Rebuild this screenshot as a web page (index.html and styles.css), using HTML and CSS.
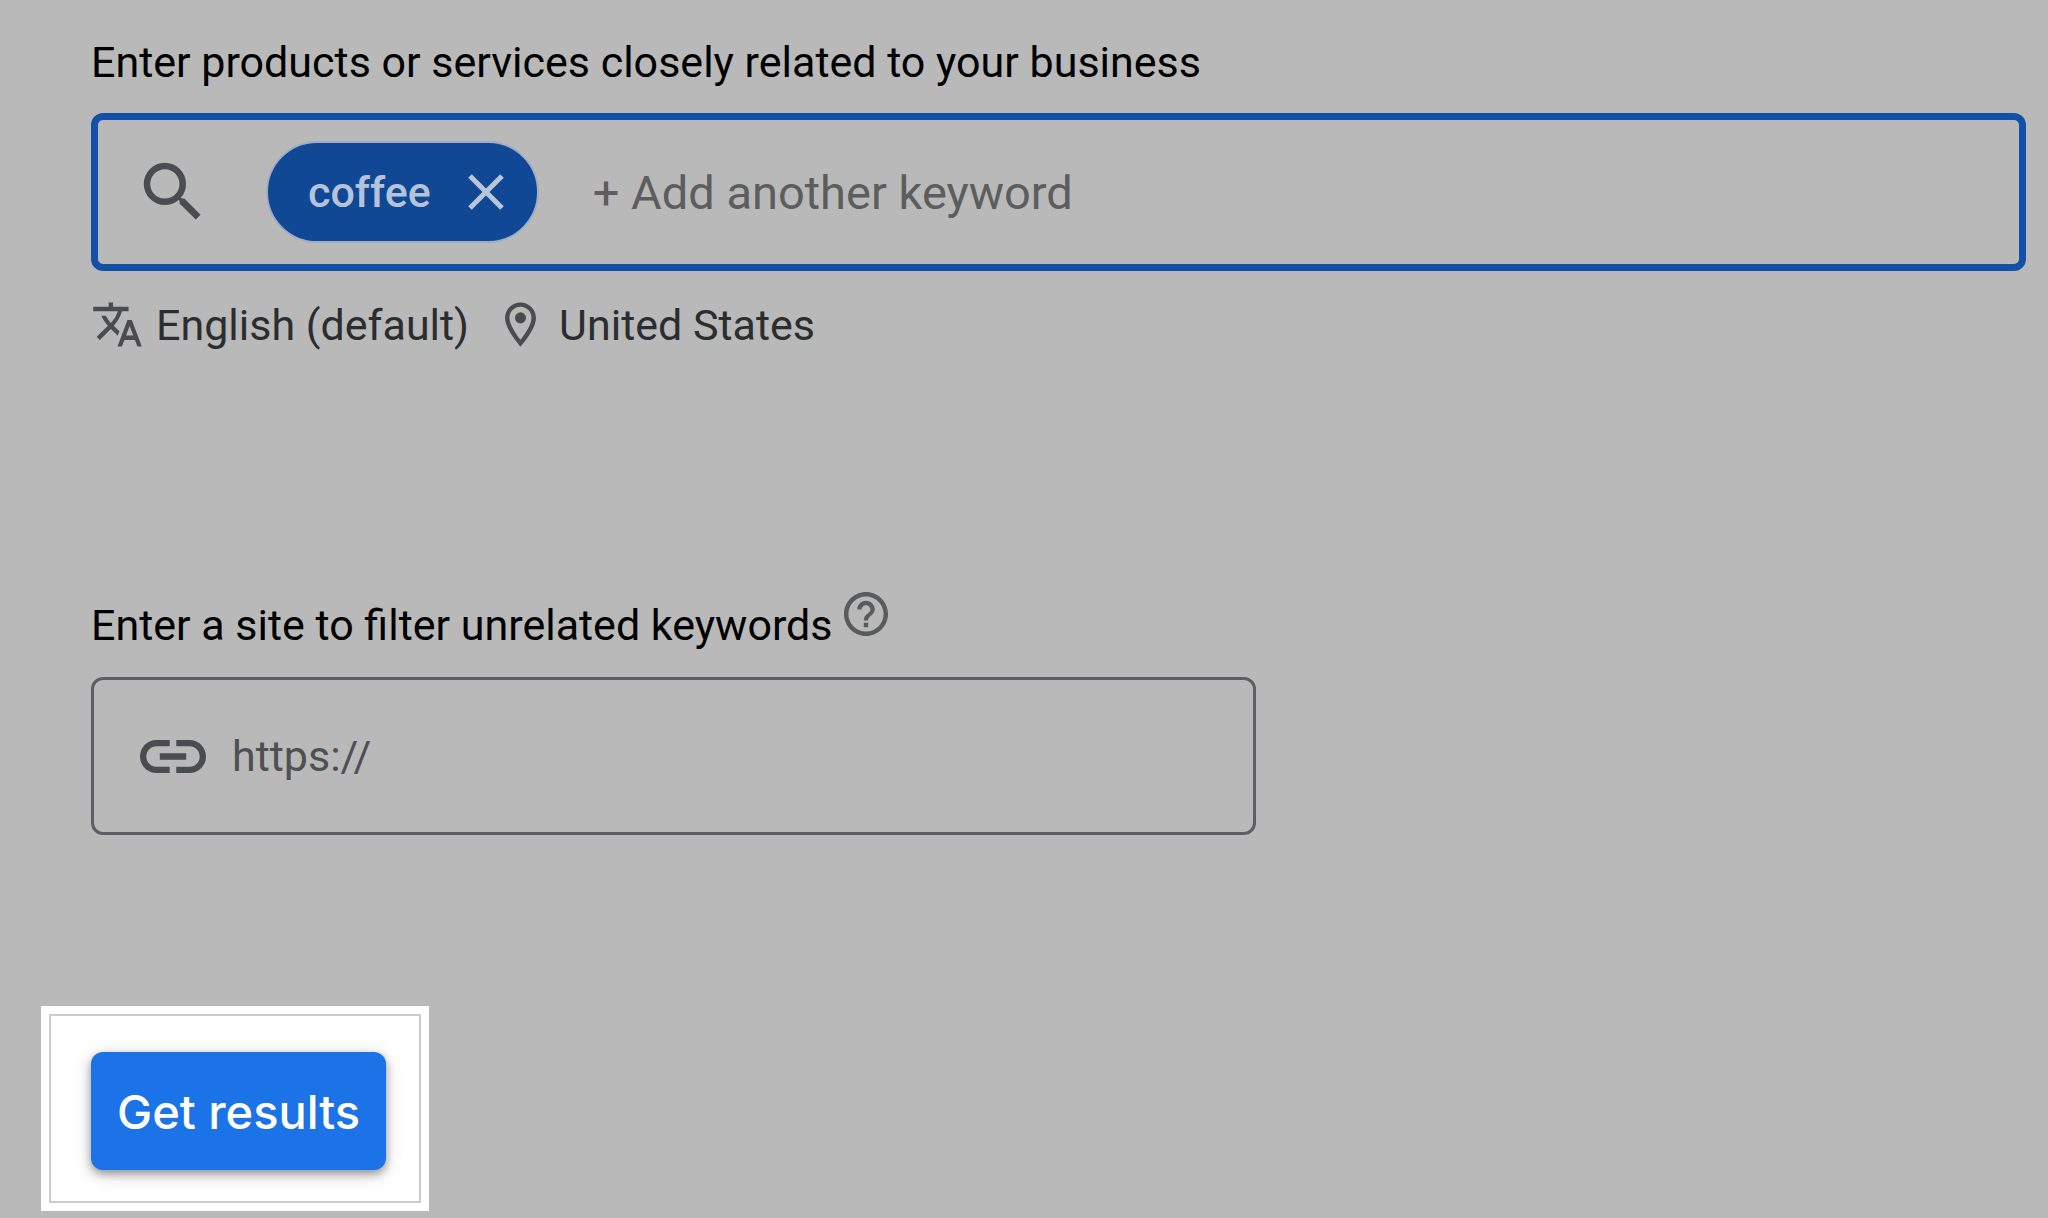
FILE: index.html
```html
<!DOCTYPE html>
<html lang="en">
<head>
  <meta charset="UTF-8">
  <title>Discover new keywords</title>
  <meta name="viewport" content="width=device-width, initial-scale=1.0">
  <link rel="stylesheet" href="styles.css">
</head>
<body>
  <form class="planner">
    <label class="field-label" for="keywords">Enter products or services closely related to your business</label>
    <div class="field keyword-field">
      <svg class="icon-search" viewBox="0 0 24 24" aria-hidden="true">
        <path d="M15.5 14h-.79l-.28-.27A6.471 6.471 0 0 0 16 9.5 6.5 6.5 0 1 0 9.5 16c1.61 0 3.09-.59 4.23-1.57l.27.28v.79l5 4.99L20.49 19l-4.99-5zm-6 0C7.01 14 5 11.99 5 9.5S7.01 5 9.5 5 14 7.01 14 9.5 11.99 14 9.5 14z"/>
      </svg>
      <div class="chip">
        <span>coffee</span>
        <button type="button" class="chip-remove" aria-label="Remove coffee">
          <svg viewBox="0 0 36 36" aria-hidden="true"><path d="M2 2L34 34M34 2L2 34"/></svg>
        </button>
      </div>
      <input type="text" id="keywords" class="keyword-input" placeholder="+ Add another keyword">
    </div>

    <div class="targeting">
      <button type="button" class="target">
        <svg class="icon-translate" viewBox="0 0 24 24" aria-hidden="true">
          <path d="M12.87 15.07l-2.54-2.51.03-.03A17.52 17.52 0 0 0 14.07 6H17V4h-7V2H8v2H1v1.99h11.17C11.5 7.92 10.44 9.75 9 11.35 8.07 10.32 7.3 9.19 6.69 8h-2c.73 1.63 1.73 3.17 2.98 4.56l-5.09 5.02L4 19l5-5 3.11 3.11.76-2.04zM18.5 10h-2L12 22h2l1.12-3h4.75L21 22h2l-4.5-12zm-2.62 7l1.62-4.33L19.12 17h-3.24z"/>
        </svg>
        English (default)
      </button>
      <button type="button" class="target">
        <svg class="icon-pin" viewBox="0 0 24 24" aria-hidden="true">
          <path d="M12 2C8.13 2 5 5.13 5 9c0 5.25 7 13 7 13s7-7.75 7-13c0-3.87-3.13-7-7-7zM7 9c0-2.76 2.24-5 5-5s5 2.24 5 5c0 2.88-2.88 7.19-5 9.88C9.92 16.21 7 11.85 7 9z"/>
          <circle cx="12" cy="9" r="2.5"/>
        </svg>
        United States
      </button>
    </div>

    <div class="site-heading">
      <label class="field-label" for="site">Enter a site to filter unrelated keywords</label>
      <button type="button" class="help" aria-label="Help">
        <svg viewBox="2 2 20 20" aria-hidden="true">
          <path d="M11 18h2v-2h-2v2zm1-16C6.48 2 2 6.48 2 12s4.48 10 10 10 10-4.48 10-10S17.52 2 12 2zm0 18c-4.41 0-8-3.59-8-8s3.59-8 8-8 8 3.59 8 8-3.59 8-8 8zm0-14c-2.21 0-4 1.79-4 4h2c0-1.1.9-2 2-2s2 .9 2 2c0 2-3 1.75-3 5h2c0-2.25 3-2.5 3-5 0-2.21-1.79-4-4-4z"/>
        </svg>
      </button>
    </div>
    <div class="field site-field">
      <svg class="icon-link" viewBox="2 7 20 10" aria-hidden="true">
        <path d="M3.9 12c0-1.71 1.39-3.1 3.1-3.1h4V7H7c-2.76 0-5 2.24-5 5s2.24 5 5 5h4v-1.9H7c-1.71 0-3.1-1.39-3.1-3.1zM8 13h8v-2H8v2zm9-6h-4v1.9h4c1.71 0 3.1 1.39 3.1 3.1s-1.39 3.1-3.1 3.1h-4V17h4c2.76 0 5-2.24 5-5s-2.24-5-5-5z"/>
      </svg>
      <input type="text" id="site" class="site-input" placeholder="https://">
    </div>

    <div class="spotlight">
      <div class="spotlight-inner">
        <button type="submit" class="btn-submit">Get results</button>
      </div>
    </div>
  </form>
</body>
</html>
```

FILE: styles.css
```css
* {
  box-sizing: border-box;
}

body {
  margin: 0;
  background: #b9b9b9;
  color: #000;
  font-family: Roboto, sans-serif;
}

button,
input {
  margin: 0;
  padding: 0;
  border: none;
  background: none;
  font: inherit;
  color: inherit;
}

button {
  cursor: pointer;
}

svg {
  display: block;
  flex: none;
  fill: #4a4c4f;
}

.planner {
  display: flex;
  flex-direction: column;
  padding: 36px 22px 0 91px;
}

.field-label {
  font-size: 43px;
  line-height: 52px;
}

.field {
  display: flex;
  align-items: center;
  height: 158px;
  border-radius: 12px;
}

.keyword-field {
  margin-top: 25px;
  padding: 0 36px;
  border: 7px solid #1351a8;
}

.icon-search {
  width: 78px;
  height: 78px;
}

.chip {
  display: flex;
  align-items: center;
  gap: 37px;
  height: 102px;
  margin: 0 54px;
  padding: 0 33px 0 40px;
  border: 2px solid #9fadc4;
  border-radius: 52px;
  background: #104896;
  color: #b4c3da;
  font-size: 43px;
  font-weight: 500;
}

.chip-remove svg {
  width: 36px;
  height: 36px;
  fill: none;
  stroke: #b9c6da;
  stroke-width: 5;
}

.keyword-input,
.site-input {
  flex: 1;
  min-width: 0;
  height: 100%;
  outline: none;
}

.keyword-input {
  font-size: 47px;
}

.keyword-input::placeholder {
  color: #5c5d5e;
  opacity: 1;
}

.targeting {
  display: flex;
  align-items: center;
  gap: 25px;
  margin-top: 27px;
  color: #2b2d30;
  font-size: 43px;
  line-height: 52px;
}

.target {
  display: flex;
  align-items: center;
  gap: 12px;
}

.icon-translate,
.icon-pin {
  width: 53px;
  height: 53px;
}

.site-heading {
  display: flex;
  align-items: flex-start;
  gap: 11px;
  margin-top: 241px;
}

.site-heading .field-label {
  margin-top: 7px;
}

.help svg {
  width: 44px;
  height: 44px;
  fill: #5a5b5d;
}

.site-field {
  width: 60.2%;
  margin-top: 26px;
  padding: 0 46px;
  border: 3px solid #5d5f62;
}

.icon-link {
  width: 66px;
  height: 33px;
  margin-right: 26px;
}

.site-input {
  font-size: 43px;
}

.site-input::placeholder {
  color: #4e5053;
  opacity: 1;
}

.spotlight {
  align-self: flex-start;
  margin: 171px 0 0 -50px;
  padding: 8px;
  background: #fff;
}

.spotlight-inner {
  padding: 36px 33px 31px 40px;
  border: 2px solid #ccc;
}

.btn-submit {
  display: block;
  height: 118px;
  padding: 0 26px;
  border-radius: 12px;
  background: #1c73e8;
  box-shadow: 0 4px 8px rgba(0, 0, 0, 0.35), 0 4px 20px rgba(0, 0, 0, 0.15);
  color: #fff;
  font-family: Inter, sans-serif;
  font-size: 47px;
  font-weight: 500;
}
```
